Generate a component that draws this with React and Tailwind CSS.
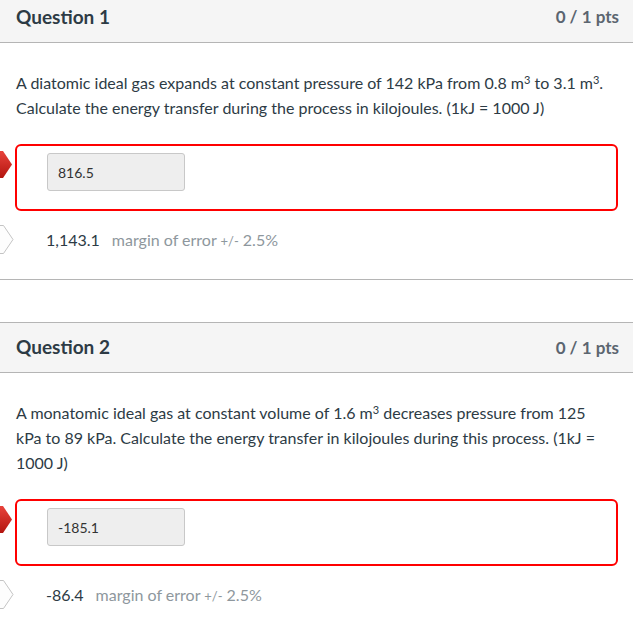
import React from 'react';

const RedArrow = () => (
  <svg className="absolute left-0 top-[7px]" width="13" height="27" viewBox="0 0 13 27">
    <defs>
      <linearGradient id="redg" x1="0" y1="0" x2="0" y2="1">
        <stop offset="0" stopColor="#e8433b" />
        <stop offset="1" stopColor="#b3150f" />
      </linearGradient>
    </defs>
    <polygon points="0,0 3,0 12,13.5 3,27 0,27" fill="url(#redg)" />
  </svg>
);

const GrayArrow = () => (
  <svg className="absolute left-0 top-[-2px]" width="15" height="29" viewBox="0 0 15 29">
    <polygon points="-2,0.5 3.5,0.5 13,14.5 3.5,28.5 -2,28.5" fill="#fdfdfd" stroke="#c4c4c4" strokeWidth="1" />
  </svg>
);

const Sup = ({ children }) => <sup className="text-[11px] leading-none">{children}</sup>;

const Question = ({ title, children, answer, correct, first }) => (
  <div className={`border-b border-[#b5b5b5] ${first ? '' : 'border-t mt-[42px]'}`}>
    <div
      className={`flex items-center justify-between bg-[#f5f5f5] border-b border-[#b5b5b5] pl-4 pr-[14px] ${
        first ? '-mt-[8px] h-[51px]' : 'h-[50px]'
      }`}
    >
      <h2 className="text-[19px] font-bold text-[#2d3b45]">{title}</h2>
      <span className="text-[17px] font-bold text-[#5b6570]">0 / 1 pts</span>
    </div>
    <div className="pl-4 pr-[22px] pt-[27px] text-[16px] leading-[25px] text-[#2d3b45]">{children}</div>
    <div className="relative mt-[24px] px-[15px]">
      <RedArrow />
      <div className="rounded-[6px] border-2 border-[#ff0000] pl-[30px] pt-[7px] pb-[18px]">
        <div className="w-[138px] h-[38px] rounded-[3px] border border-[#c8c8c8] bg-[#eeeeee] flex items-center px-[10px] text-[14px] text-[#333]">
          {answer}
        </div>
      </div>
    </div>
    <div className="relative mt-[16px] mb-[27px] pl-[46px] h-[25px] flex items-center text-[16px]">
      <GrayArrow />
      <span className="text-[#2d3b45]">{correct}</span>
      <span className="ml-[12px] text-[#8e979d]">
        margin of error <span className="text-[13px]">+/-</span> 2.5%
      </span>
    </div>
  </div>
);

export default function App() {
  return (
    <div className="w-[633px] h-[628px] overflow-hidden bg-white" style={{ fontFamily: 'Lato, "Noto Sans", sans-serif' }}>
      <Question title="Question 1" answer="816.5" correct="1,143.1" first>
        A diatomic ideal gas expands at constant pressure of 142 kPa from 0.8 m<Sup>3</Sup> to 3.1 m<Sup>3</Sup>.
        <br />
        Calculate the energy transfer during the process in kilojoules. (1kJ = 1000 J)
      </Question>
      <Question title="Question 2" answer="-185.1" correct="-86.4">
        A monatomic ideal gas at constant volume of 1.6 m<Sup>3</Sup> decreases pressure from 125 kPa to 89 kPa.
        Calculate the energy transfer in kilojoules during this process. (1kJ = 1000 J)
      </Question>
    </div>
  );
}
